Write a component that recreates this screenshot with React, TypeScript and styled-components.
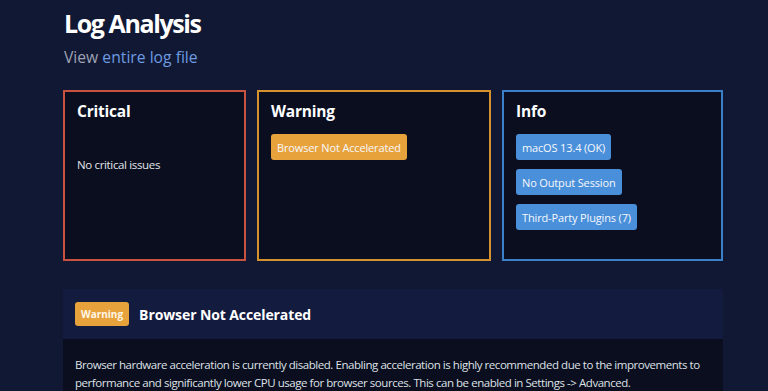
import React from "react";
import styled, { createGlobalStyle } from "styled-components";

const GlobalStyle = createGlobalStyle`
  html, body {
    margin: 0;
    padding: 0;
    background: #111833;
    overflow: hidden;
  }
  body {
    font-family: "Open Sans", "Noto Sans", sans-serif;
    color: #ffffff;
    -webkit-font-smoothing: antialiased;
  }
`;

const Page = styled.div`
  width: 660px;
  padding: 4px 45px 0 63px;
  display: flex;
  flex-direction: column;
`;

const Title = styled.h1`
  margin: 0 0 0 1px;
  font-size: 25px;
  line-height: 38px;
  font-weight: 700;
  letter-spacing: -1.4px;
  color: #ffffff;
`;

const Subtitle = styled.p`
  margin: 5px 0 0 1px;
  font-size: 15.7px;
  line-height: 20px;
  color: #9ea3b3;
`;

const Link = styled.a`
  color: #6d9be2;
  text-decoration: none;
`;

const Cards = styled.div`
  display: grid;
  grid-template-columns: 183px 234px 221px;
  column-gap: 11px;
  margin-top: 23px;
`;

const Card = styled.section<{ $border: string }>`
  height: 171px;
  box-sizing: border-box;
  border: 2px solid ${(p) => p.$border};
  background: #0a0e1f;
  padding: 8px 12px;
  display: flex;
  flex-direction: column;
  align-items: flex-start;
`;

const CardTitle = styled.h2`
  margin: 0;
  font-size: 15.5px;
  line-height: 23px;
  font-weight: 700;
  letter-spacing: -0.2px;
  color: #ffffff;
`;

const Empty = styled.p`
  margin: 34px 0 0;
  font-size: 11.5px;
  line-height: 16px;
  letter-spacing: -0.35px;
  color: #e2e4ea;
`;

const BadgeList = styled.div`
  display: flex;
  flex-direction: column;
  align-items: flex-start;
  gap: 9px;
  margin-top: 11px;
`;

const Badge = styled.span<{ $bg: string }>`
  display: inline-flex;
  align-items: center;
  height: 26px;
  padding: 0 6px;
  border-radius: 3px;
  background: ${(p) => p.$bg};
  color: #f6f8fc;
  font-size: 11px;
  letter-spacing: -0.15px;
  white-space: nowrap;
`;

const Detail = styled.article`
  margin-top: 28px;
  display: flex;
  flex-direction: column;
`;

const DetailHeader = styled.header`
  height: 50px;
  background: #131b3f;
  display: flex;
  align-items: center;
  gap: 10px;
  padding: 0 12px;
`;

const Tag = styled.span`
  display: inline-flex;
  align-items: center;
  height: 24px;
  padding: 0 6px;
  border-radius: 3px;
  background: #e8a23c;
  color: #fff6e8;
  font-size: 10px;
  font-weight: 700;
`;

const DetailTitle = styled.h3`
  margin: 0;
  font-size: 14px;
  font-weight: 700;
  letter-spacing: -0.1px;
  color: #ffffff;
`;

const DetailBody = styled.div`
  background: #0a0e1f;
  padding: 17px 8px 10px 12px;
  font-size: 11.5px;
  line-height: 18px;
  letter-spacing: -0.45px;
  color: #dfe1e6;
`;

const ORANGE = "#e8a23c";
const BLUE = "#4a8fd9";

export default function App() {
  return (
    <>
      <GlobalStyle />
      <Page>
        <Title>Log Analysis</Title>
        <Subtitle>
          View <Link href="#">entire log file</Link>
        </Subtitle>
        <Cards>
          <Card $border="#c8513f">
            <CardTitle>Critical</CardTitle>
            <Empty>No critical issues</Empty>
          </Card>
          <Card $border="#d4922e">
            <CardTitle>Warning</CardTitle>
            <BadgeList>
              <Badge $bg={ORANGE}>Browser Not Accelerated</Badge>
            </BadgeList>
          </Card>
          <Card $border="#3b80c6">
            <CardTitle>Info</CardTitle>
            <BadgeList>
              <Badge $bg={BLUE}>macOS 13.4 (OK)</Badge>
              <Badge $bg={BLUE}>No Output Session</Badge>
              <Badge $bg={BLUE}>Third-Party Plugins (7)</Badge>
            </BadgeList>
          </Card>
        </Cards>
        <Detail>
          <DetailHeader>
            <Tag>Warning</Tag>
            <DetailTitle>Browser Not Accelerated</DetailTitle>
          </DetailHeader>
          <DetailBody>
            Browser hardware acceleration is currently disabled. Enabling acceleration is highly
            recommended due to the improvements to performance and significantly lower CPU usage for
            browser sources. This can be enabled in Settings -&gt; Advanced.
          </DetailBody>
        </Detail>
      </Page>
    </>
  );
}
